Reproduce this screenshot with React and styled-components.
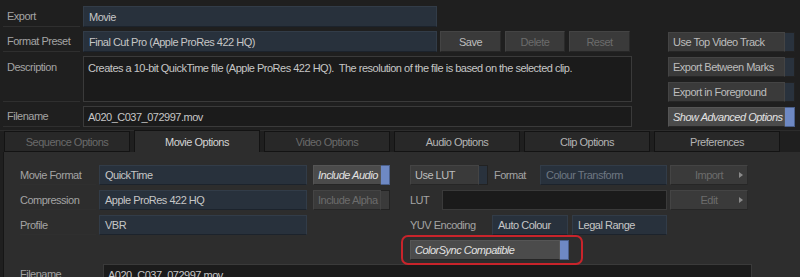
import React from "react";
import styled, { createGlobalStyle, css } from "styled-components";

const Global = createGlobalStyle`
  html, body { margin: 0; padding: 0; background: #1f1f1f; }
  body {
    font-family: "Liberation Sans", Arial, sans-serif;
    font-size: 11px;
    letter-spacing: -0.5px;
    width: 800px;
    height: 277px;
    overflow: hidden;
  }
`;

const Page = styled.div`
  width: 800px;
  height: 277px;
  background: #1f1f1f;
  display: flex;
  flex-direction: column;
  overflow: hidden;
`;

const Top = styled.div`
  display: flex;
  padding: 6px 0 0 3px;
  height: 122px;
`;

const Fields = styled.div`
  width: 629px;
  display: flex;
  flex-direction: column;
  gap: 4px;
`;

const Row = styled.div`
  display: flex;
  gap: ${(p) => p.$gap ?? 3}px;
  height: ${(p) => p.$h ?? 21}px;
  align-items: stretch;
`;

const Label = styled.div`
  width: ${(p) => p.$w ?? 77}px;
  flex: none;
  box-sizing: border-box;
  padding-left: ${(p) => p.$pad ?? 4}px;
  display: flex;
  align-items: ${(p) => (p.$top ? "flex-start" : "center")};
  padding-top: ${(p) => (p.$top ? 5 : 0)}px;
  color: #a4a4a4;
  border-bottom: 1px solid ${(p) => (p.$plain ? "transparent" : "#2f2f2f")};
  white-space: nowrap;
`;

const Value = styled.div`
  width: ${(p) => (p.$w ? p.$w + "px" : "auto")};
  flex: ${(p) => (p.$w ? "none" : "1")};
  box-sizing: border-box;
  background: #28313c;
  border: 1px solid #323c48;
  border-bottom-color: #1c232c;
  padding-left: 5px;
  display: flex;
  align-items: center;
  color: ${(p) => (p.$dim ? "#6e7782" : "#c6c6c6")};
  white-space: nowrap;
  overflow: hidden;
`;

const DarkField = styled.div`
  flex: 1;
  width: ${(p) => (p.$w ? p.$w + "px" : "auto")};
  box-sizing: border-box;
  background: #1b1b1b;
  border: 1px solid #3a3a3a;
  padding: ${(p) => (p.$multi ? "5px 4px" : "0 4px")};
  display: flex;
  align-items: ${(p) => (p.$multi ? "flex-start" : "center")};
  color: #c6c6c6;
  white-space: pre;
  overflow: hidden;
`;

const Button = styled.div`
  width: ${(p) => p.$w}px;
  flex: none;
  box-sizing: border-box;
  background: #3a3a3a;
  border: 1px solid #444;
  border-bottom-color: #262626;
  border-right-color: #2a2a2a;
  display: flex;
  align-items: center;
  justify-content: center;
  color: ${(p) => (p.$dim ? "#6c6c6c" : "#bdbdbd")};
  position: relative;
`;

const Arrow = styled.span`
  position: absolute;
  right: 4px;
  top: 50%;
  margin-top: -3px;
  width: 0;
  height: 0;
  border-left: 4px solid #8a8a8a;
  border-top: 3px solid transparent;
  border-bottom: 3px solid transparent;
`;

const Toggles = styled.div`
  margin-left: 36px;
  margin-top: 26px;
  display: flex;
  flex-direction: column;
  gap: 5px;
`;

const Toggle = styled.div`
  display: flex;
  width: ${(p) => p.$w}px;
  height: 20px;
  flex: none;
`;

const ToggleBody = styled.div`
  flex: 1;
  box-sizing: border-box;
  background: ${(p) => (p.$on ? "#4b4b4b" : "#3a3a3a")};
  border: 1px solid ${(p) => (p.$on ? "#555" : "#444")};
  border-bottom-color: #262626;
  padding-left: 4px;
  display: flex;
  align-items: center;
  white-space: nowrap;
  overflow: hidden;
  color: ${(p) => (p.$dim ? "#6c6c6c" : p.$on ? "#e2e2e2" : "#bdbdbd")};
  font-style: ${(p) => (p.$on ? "italic" : "normal")};
`;

const Indicator = styled.div`
  width: ${(p) => p.$w ?? 10}px;
  flex: none;
  box-sizing: border-box;
  border: 1px solid #222;
  border-left: none;
  ${(p) =>
    p.$on
      ? css`background: #6e89c4; border-color: #4a5f8a;`
      : p.$gray
      ? css`background: #3a3a3a;`
      : css`background: #29323d;`}
`;

const TabBar = styled.div`
  display: flex;
  gap: 4px;
  padding-left: 4px;
  height: 21px;
  align-items: flex-end;
  margin-top: 3px;
  border-top: 1px solid #2c2c2c;
`;

const Tab = styled.div`
  width: 126px;
  box-sizing: border-box;
  height: ${(p) => (p.$active ? 22 : 21)}px;
  display: flex;
  align-items: center;
  justify-content: center;
  background: ${(p) => (p.$active ? "#2d2d2d" : "#282828")};
  border: 1px solid #131313;
  border-bottom: ${(p) => (p.$active ? "none" : "1px solid #131313")};
  color: ${(p) => (p.$active ? "#d4d4d4" : p.$dim ? "#6a6a6a" : "#b4b4b4")};
`;

const Panel = styled.div`
  flex: 1;
  margin-left: 3px;
  background: #2d2d2d;
  border-left: 1px solid #161616;
  padding: 13px 0 0 16px;
  display: flex;
  flex-direction: column;
`;

const Upper = styled.div`
  display: flex;
`;

const Col = styled.div`
  display: flex;
  flex-direction: column;
  gap: 5px;
  width: ${(p) => p.$w}px;
`;

const Highlight = styled.div`
  align-self: flex-start;
  margin: -5px -14px -5px -9px;
  padding: 3px 12px 3px 7px;
  border: 2px solid #c8242b;
  border-radius: 7px;
  position: relative;
  z-index: 1;
`;

const FileRow = styled(Row)`
  margin-top: 4px;
`;

export default function App() {
  return (
    <>
      <Global />
      <Page>
        <Top>
          <Fields>
            <Row>
              <Label>Export</Label>
              <Value $w={354}>Movie</Value>
            </Row>
            <Row>
              <Label>Format Preset</Label>
              <Value $w={354}>Final Cut Pro (Apple ProRes 422 HQ)</Value>
              <Row $gap={4}>
                <Button $w={61}>Save</Button>
                <Button $w={60} $dim>Delete</Button>
                <Button $w={61} $dim>Reset</Button>
              </Row>
            </Row>
            <Row $h={46}>
              <Label $top>Description</Label>
              <DarkField $multi>
                {"Creates a 10-bit QuickTime file (Apple ProRes 422 HQ).  The resolution of the file is based on the selected clip."}
              </DarkField>
            </Row>
            <Row>
              <Label>Filename</Label>
              <DarkField>A020_C037_072997.mov</DarkField>
            </Row>
          </Fields>
          <Toggles>
            <Toggle $w={127}>
              <ToggleBody>Use Top Video Track</ToggleBody>
              <Indicator />
            </Toggle>
            <Toggle $w={127}>
              <ToggleBody>Export Between Marks</ToggleBody>
              <Indicator />
            </Toggle>
            <Toggle $w={127}>
              <ToggleBody>Export in Foreground</ToggleBody>
              <Indicator />
            </Toggle>
            <Toggle $w={127}>
              <ToggleBody $on>Show Advanced Options</ToggleBody>
              <Indicator $on />
            </Toggle>
          </Toggles>
        </Top>
        <TabBar>
          <Tab $dim>Sequence Options</Tab>
          <Tab $active>Movie Options</Tab>
          <Tab $dim>Video Options</Tab>
          <Tab>Audio Options</Tab>
          <Tab>Clip Options</Tab>
          <Tab>Preferences</Tab>
        </TabBar>
        <Panel>
          <Upper>
            <Col $w={390}>
              <Row $h={20}>
                <Label $w={76} $pad={0}>Movie Format</Label>
                <Value $w={208}>QuickTime</Value>
                <Toggle $w={77} style={{ marginLeft: 3 }}>
                  <ToggleBody $on>Include Audio</ToggleBody>
                  <Indicator $on $w={9} />
                </Toggle>
              </Row>
              <Row $h={20}>
                <Label $w={76} $pad={0}>Compression</Label>
                <Value $w={208}>Apple ProRes 422 HQ</Value>
                <Toggle $w={77} style={{ marginLeft: 3 }}>
                  <ToggleBody $dim>Include Alpha</ToggleBody>
                  <Indicator $gray $w={9} />
                </Toggle>
              </Row>
              <Row $h={20}>
                <Label $w={76} $pad={0}>Profile</Label>
                <Value $w={208}>VBR</Value>
              </Row>
            </Col>
            <Col $w={340}>
              <Row $h={20} $gap={0}>
                <Toggle $w={78}>
                  <ToggleBody>Use LUT</ToggleBody>
                  <Indicator $w={9} />
                </Toggle>
                <Label $w={52} $pad={6} $plain>Format</Label>
                <Value $w={127} $dim>Colour Transform</Value>
                <Button $w={78} $dim style={{ marginLeft: 3 }}>
                  Import<Arrow />
                </Button>
              </Row>
              <Row $h={20} $gap={0}>
                <Label $w={32} $pad={0} $plain>LUT</Label>
                <DarkField $w={225} style={{ flex: "none" }} />
                <Button $w={78} $dim style={{ marginLeft: 3 }}>
                  Edit<Arrow />
                </Button>
              </Row>
              <Row $h={20} $gap={4}>
                <Label $w={78} $pad={0} $plain>YUV Encoding</Label>
                <Value $w={76}>Auto Colour</Value>
                <Value $w={95}>Legal Range</Value>
              </Row>
              <Highlight>
                <Toggle $w={159}>
                  <ToggleBody $on>ColorSync Compatible</ToggleBody>
                  <Indicator $on $w={9} />
                </Toggle>
              </Highlight>
            </Col>
          </Upper>
          <FileRow $h={21}>
            <Label $w={80} $pad={0}>Filename</Label>
            <DarkField $w={649} style={{ flex: "none" }}>A020_C037_072997.mov</DarkField>
          </FileRow>
        </Panel>
      </Page>
    </>
  );
}
